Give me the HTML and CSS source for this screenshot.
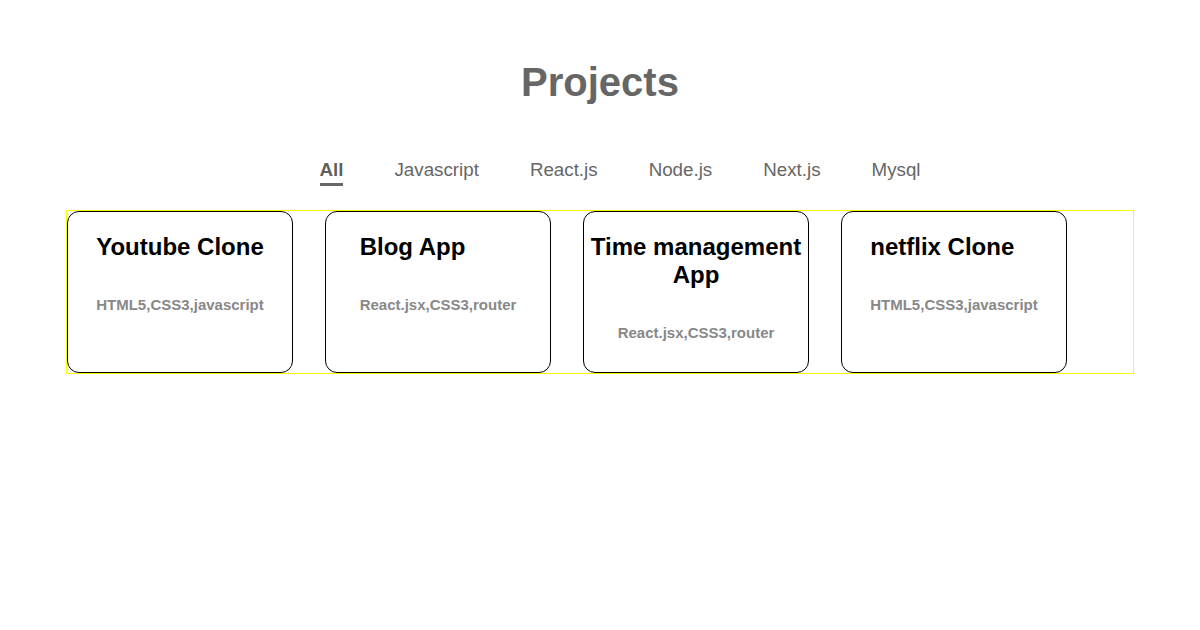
FILE: index.html
```html
<!DOCTYPE html>
<html lang="en">
<head>
<meta charset="utf-8">
<title>Projects</title>
<link rel="stylesheet" href="styles.css">
</head>
<body>
<section class="projects">
  <h1 class="projects-title">Projects</h1>
  <ul class="filters">
    <li class="filter active">All</li>
    <li class="filter">Javascript</li>
    <li class="filter">React.js</li>
    <li class="filter">Node.js</li>
    <li class="filter">Next.js</li>
    <li class="filter">Mysql</li>
  </ul>
  <div class="grid">
    <div class="card">
      <div class="card-body">
        <h2 class="card-title">Youtube Clone</h2>
        <p class="card-tech">HTML5,CSS3,javascript</p>
      </div>
    </div>
    <div class="card">
      <div class="card-body">
        <h2 class="card-title">Blog App</h2>
        <p class="card-tech">React.jsx,CSS3,router</p>
      </div>
    </div>
    <div class="card">
      <div class="card-body">
        <h2 class="card-title">Time management App</h2>
        <p class="card-tech">React.jsx,CSS3,router</p>
      </div>
    </div>
    <div class="card">
      <div class="card-body">
        <h2 class="card-title">netflix Clone</h2>
        <p class="card-tech">HTML5,CSS3,javascript</p>
      </div>
    </div>
  </div>
</section>
</body>
</html>
```

FILE: styles.css
```css
html, body {
  margin: 0;
  padding: 0;
  background: #fff;
}

body {
  font-family: "Liberation Sans", Arial, sans-serif;
}

.projects {
  display: flex;
  flex-direction: column;
  align-items: center;
}

.projects-title {
  margin: 60px 0 0;
  font-size: 40px;
  font-weight: 700;
  line-height: normal;
  color: #666;
}

.filters {
  list-style: none;
  display: flex;
  justify-content: center;
  gap: 51px;
  margin: 54px 0 0;
  padding: 0 0 0 40px;
}

.filter {
  font-size: 18.75px;
  line-height: normal;
  color: #666;
  padding-bottom: 5px;
  cursor: pointer;
}

.filter.active {
  font-weight: 700;
  color: #5f5f5f;
  padding-bottom: 2px;
  border-bottom: 3px solid #666;
}

.grid {
  box-sizing: border-box;
  width: 1068px;
  margin-top: 24px;
  border: 1px solid #ffff00;
  display: flex;
  gap: 32px;
}

.card {
  box-sizing: border-box;
  width: 226px;
  height: 162px;
  border: 1px solid #000;
  border-radius: 12px;
  display: flex;
  flex-direction: column;
  align-items: center;
  text-align: center;
}

.card-body {
  display: flex;
  flex-direction: column;
  max-width: 100%;
}

.card-title {
  align-self: flex-start;
  margin: 20.5px 0 0;
  font-size: 24px;
  font-weight: 700;
  line-height: 28px;
  color: #000;
}

.card-tech {
  align-self: center;
  margin: 35.5px 0 0;
  font-size: 15px;
  font-weight: 700;
  line-height: normal;
  color: #888;
}
```
